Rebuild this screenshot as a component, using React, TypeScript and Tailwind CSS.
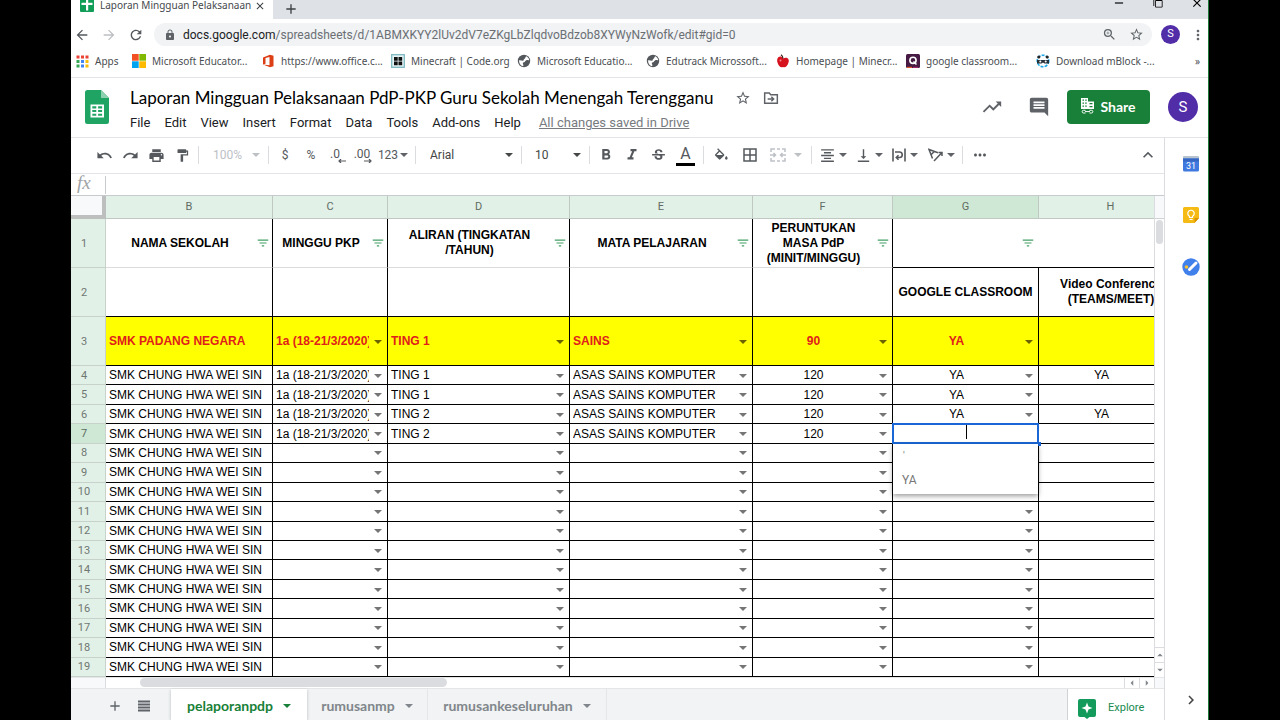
import type { ReactNode } from "react";
import {
  MdArrowBack, MdArrowForward, MdRefresh, MdLock, MdOutlineZoomIn, MdStarBorder, MdMoreVert,
  MdUndo, MdRedo, MdPrint, MdFormatPaint, MdFormatBold, MdFormatItalic, MdStrikethroughS,
  MdBorderAll, MdFormatAlignCenter, MdVerticalAlignBottom, MdMoreHoriz, MdExpandLess, MdFilterList, MdTrendingUp,
  MdComment, MdAdd, MdClose, MdChevronRight, MdRemove, MdFilterNone,
} from "react-icons/md";

const roboto = "font-[Roboto,'Liberation_Sans',sans-serif]";
const humanist = "font-['Noto_Sans','Open_Sans',sans-serif]";
const brand = "font-['Lato','Open_Sans',sans-serif]";

function Caret({ className = "fill-[#5f6368]" }: { className?: string }) {
  return (
    <svg viewBox="0 0 8 4" className={`h-1 w-2 shrink-0 ${className}`} aria-hidden="true">
      <path d="M0 0h8L4 4z" />
    </svg>
  );
}

function SheetsMark() {
  return (
    <svg viewBox="0 0 24 34" className="h-[34px] w-6 shrink-0" aria-hidden="true">
      <path d="M2.500 0H16l8 8v23.500a2.500 2.500 0 0 1-2.500 2.500h-19A2.500 2.500 0 0 1 0 31.500v-29A2.500 2.500 0 0 1 2.500 0z" fill="#1fa463" />
      <path d="M16 0l8 8h-8z" fill="#8ed1b1" />
      <path d="M5.500 14.500h13.500v13H5.500zM7.300 16.300v2.100h4v-2.100zm5.800 0v2.100h4v-2.100zM7.300 20v2.100h4V20zm5.800 0v2.100h4V20zM7.300 23.700v2.100h4v-2.100zm5.800 0v2.100h4v-2.100z" fill="#fff" fillRule="evenodd" />
    </svg>
  );
}

function TabIcon() {
  return (
    <svg viewBox="0 0 14 14" className="size-3.5 shrink-0" aria-hidden="true">
      <rect width="14" height="14" rx="1" fill="#0f9d58" />
      <path d="M6 1.500h2.200v11H6zM1.500 4.800h11V7h-11z" fill="#fff" />
    </svg>
  );
}

const appDots = ["#ea4335", "#ea4335", "#ea4335", "#34a853", "#4285f4", "#fbbc04", "#34a853", "#4285f4", "#fbbc04"];

const appsIcon = (
  <svg viewBox="0 0 13 13" className="size-[13px] shrink-0" aria-hidden="true">
    {appDots.map((c, i) => (
      <rect key={i} x={0.5 + (i % 3) * 4.500} y={0.5 + Math.floor(i / 3) * 4.500} width="3" height="3" fill={c} />
    ))}
  </svg>
);
const microsoftIcon = (
  <svg viewBox="0 0 14 14" className="size-3.5 shrink-0" aria-hidden="true">
    <path fill="#f25022" d="M0 0h6.700v6.700H0z" />
    <path fill="#7fba00" d="M7.300 0H14v6.700H7.300z" />
    <path fill="#00a4ef" d="M0 7.300h6.700V14H0z" />
    <path fill="#ffb900" d="M7.300 7.300H14V14H7.300z" />
  </svg>
);
const officeIcon = (
  <svg viewBox="0 0 14 14" className="size-3.5 shrink-0" aria-hidden="true">
    <path d="M2 3.500L9 .8l3.500 1v10.400l-3.500 1-7-2.700 6.500.8V2.900L4.500 4v5.700L2 10.600z" fill="#dc3e15" />
  </svg>
);
const codeIcon = (
  <svg viewBox="0 0 14 14" className="size-3.5 shrink-0" aria-hidden="true">
    <rect x=".7" y=".7" width="12.600" height="12.600" fill="#e8f5f7" stroke="#7db8c0" strokeWidth="1.300" />
    <path d="M3 3h3.700v3.700H3zM7.500 3h3.700v3.700H7.500zM3 7.500h3.700v3.700H3zM7.500 7.500h3.700v3.700H7.500z" fill="#111" />
  </svg>
);
const globeIcon = (
  <svg viewBox="0 0 14 14" className="size-3.5 shrink-0" aria-hidden="true">
    <circle cx="7" cy="7" r="6.200" fill="#54585c" />
    <path d="M2 6.500C3.500 6 5 7 6 6.800s.5-1.600 1.500-2 .5-1.700 1.800-2.600C11 3 12 4.500 12.300 6c-1 .8-2-.3-3 .3S8 8 7 8.300 5.500 9 6 10s.5 1.500 0 2.200C3.500 11.500 2 9.500 2 6.500z" fill="#fff" />
    <path d="M3 4.500C4 3 5 2.300 6.500 2c.3.8-.7 1.200-1 1.900s-1.500.9-2.500.6zM9.500 9.500l2-.8c-.4 1-.9 1.700-1.700 2.400z" fill="#54585c" />
  </svg>
);
const appleIcon = (
  <svg viewBox="0 0 14 14" className="size-3.5 shrink-0" aria-hidden="true">
    <path d="M7 4.500C4 0 0 4 1.500 8.500 2.500 12.500 5 14 7 13c2 1 4.500-.5 5.500-4.500C14 4 10 2.500 7 4.500z" fill="#d5121e" />
    <path d="M7 4.500C6.800 2.800 6 1.500 5 .8" stroke="#3b1a10" strokeWidth="1.200" fill="none" />
    <circle cx="4.500" cy="6.500" r="1" fill="#f58a8a" />
  </svg>
);
const quizIcon = (
  <svg viewBox="0 0 14 14" className="size-3.5 shrink-0" aria-hidden="true">
    <rect width="14" height="14" rx="1.500" fill="#461a42" />
    <path d="M1 12.800h5V14H1z" fill="#e0562f" />
    <path d="M7 12.800h5V14H7z" fill="#a02767" />
    <circle cx="7" cy="6.300" r="3.100" fill="none" stroke="#fff" strokeWidth="1.600" />
    <path d="M7.500 7.500l3 3" stroke="#fff" strokeWidth="1.500" />
  </svg>
);
const pandaIcon = (
  <svg viewBox="0 0 14 14" className="size-3.5 shrink-0" aria-hidden="true">
    <circle cx="7" cy="7" r="5.800" fill="#fff" stroke="#1ba9e6" strokeWidth="1.600" strokeDasharray="3 1.200" />
    <circle cx="2.800" cy="3" r="1.600" fill="#222" />
    <circle cx="11.200" cy="3" r="1.600" fill="#222" />
    <path d="M1 6h12v3.500H8.500L7 8.500 5.500 9.500H1z" fill="#26323a" />
    <circle cx="4.300" cy="7.600" r="1" fill="#fff" />
    <circle cx="9.700" cy="7.600" r="1" fill="#fff" />
  </svg>
);

const bookmarks: { label: string; width: string; icon: ReactNode }[] = [
  { label: "Apps", width: "w-[56px]", icon: appsIcon },
  { label: "Microsoft Educator...", width: "w-[129px]", icon: microsoftIcon },
  { label: "https://www.office.c...", width: "w-[130px]", icon: officeIcon },
  { label: "Minecraft | Code.org", width: "w-[126px]", icon: codeIcon },
  { label: "Microsoft Educatio...", width: "w-[129px]", icon: globeIcon },
  { label: "Edutrack Microssoft...", width: "w-[130px]", icon: globeIcon },
  { label: "Homepage | Minecr...", width: "w-[130px]", icon: appleIcon },
  { label: "google classroom...", width: "w-[130px]", icon: quizIcon },
  { label: "Download mBlock -...", width: "w-[130px]", icon: pandaIcon },
];

function Browser() {
  return (
    <div className={`${roboto} shrink-0`}>
      <div className="flex h-[19px] overflow-hidden bg-[#dee1e6]">
        <div className="flex h-[19px] w-[202px] items-start gap-1.5 bg-white pl-[9px]">
          <div className="-mt-0.5"><TabIcon /></div>
          <span className={`${humanist} w-[148px] text-[10px] leading-[11px] whitespace-nowrap text-[#45494d]`}>Laporan Mingguan Pelaksanaan</span>
          <button aria-label="Close tab"><MdClose className="size-3 text-[#3c4043]" /></button>
        </div>
        <div className="flex-1 rounded-bl-md bg-[#dee1e6] pl-2.5">
          <button aria-label="New tab" className="-mt-1"><MdAdd className="size-4 text-[#3c4043]" /></button>
        </div>
        <div className="flex items-start gap-[27px] pr-1 text-black">
          <button aria-label="Minimize"><MdRemove className="-mt-1 size-3.5" /></button>
          <button aria-label="Restore"><MdFilterNone className="-mt-0.5 size-2.5 -scale-x-100 rotate-180" /></button>
          <button aria-label="Close window"><MdClose className="-mt-1 size-3.5" /></button>
        </div>
      </div>
      <div className="flex h-[31px] items-center bg-white pl-[3px]">
        <button aria-label="Back" className="w-[27px]"><MdArrowBack className="size-4 text-[#55595d]" /></button>
        <button aria-label="Forward" className="w-[27px]"><MdArrowForward className="size-4 text-[#bcbfc3]" /></button>
        <button aria-label="Reload" className="w-[26px]"><MdRefresh className="size-4 text-[#55595d]" /></button>
        <label className="flex h-[23px] flex-1 items-center rounded-full bg-[#f1f3f4] pr-2 pl-2.5">
          <MdLock className="size-3 text-[#5f6368]" aria-hidden="true" />
          <span className="ml-[7px] flex-1 overflow-hidden text-[12px] whitespace-nowrap text-[#6b6f74]">
            <span className="text-[#202124]">docs.google.com</span>/spreadsheets/d/1ABMXKYY2lUv2dV7eZKgLbZlqdvoBdzob8XYWyNzWofk/edit#gid=0
          </span>
          <button aria-label="Zoom" className="mr-3"><MdOutlineZoomIn className="size-[15px] text-[#5f6368]" /></button>
          <button aria-label="Bookmark this page"><MdStarBorder className="size-[15px] text-[#5f6368]" /></button>
        </label>
        <span className="ml-[9px] flex size-[19px] items-center justify-center rounded-full bg-[#512da8] text-[11px] text-white">S</span>
        <button aria-label="Browser menu" className="mr-0.5 ml-2.5"><MdMoreVert className="size-4 text-[#5f6368]" /></button>
      </div>
      <nav aria-label="Bookmarks" className={`${humanist} flex h-7 items-start border-b border-[#e2e4e7] bg-white pt-[3px] pr-2 pl-[5px] text-[10px] leading-4 text-[#4a4e52]`}>
        {bookmarks.map((b) => (
          <a key={b.label} href="#" className={`flex items-center gap-1.5 whitespace-nowrap ${b.width}`}>
            {b.icon}
            {b.label}
          </a>
        ))}
        <button aria-label="More bookmarks" className="ml-auto">»</button>
      </nav>
    </div>
  );
}

const menus = ["File", "Edit", "View", "Insert", "Format", "Data", "Tools", "Add-ons", "Help"];

function DocHeader() {
  return (
    <header className="flex h-[60px] shrink-0 items-start border-b border-[#e2e4e7] pt-3 pr-2.5 pl-3.5">
      <SheetsMark />
      <div className="-mt-1.5 ml-[21px]">
        <div className="flex h-7 items-center text-[#5f6368]">
          <h1 className={`${brand} text-[17px] leading-6 whitespace-nowrap text-black`}>Laporan Mingguan Pelaksanaan PdP-PKP Guru Sekolah Menengah Terengganu</h1>
          <button aria-label="Star" className="ml-[22px]"><MdStarBorder className="size-4" /></button>
          <button aria-label="Move" className="ml-3">
            <svg viewBox="0 0 24 24" className="size-4" fill="none" stroke="currentColor" strokeWidth="2.200" aria-hidden="true">
              <path d="M2.500 4.500h7l2 2.500h10v13h-19zM7 13.500h8M12.500 10l3.500 3.500-3.500 3.500" />
            </svg>
          </button>
        </div>
        <nav aria-label="Menu" className={`${roboto} flex gap-3.5 text-[13px] leading-[22px] text-[#202124]`}>
          {menus.map((m) => <button key={m}>{m}</button>)}
          <a href="#" className="ml-1 text-[#777b80] underline">All changes saved in Drive</a>
        </nav>
      </div>
      <div className="ml-auto flex h-[34px] items-center text-[#5f6368]">
        <button aria-label="Activity"><MdTrendingUp className="size-[22px]" /></button>
        <button aria-label="Comments" className="ml-[25px]"><MdComment className="size-[22px]" /></button>
        <button className={`${brand} ml-[17px] flex h-[34px] w-[83px] items-center justify-center gap-1.5 rounded bg-[#188038] pb-0.5 text-[14px] font-bold text-white`}>
          <svg viewBox="0 0 13 16" className="h-4 w-[13px]" fill="#fff" aria-hidden="true">
            <path d="M0 0h7v3.500h6V11H0zM1.500 1.500v1.300h1.500V1.500zm2.700 0v1.300h1.500V1.500zM1.500 4.500v1.300h1.500V4.500zm2.700 0v1.300h1.500V4.500zM1.500 7.500v1.300h1.500V7.500zm2.700 0v1.300h1.500V7.500zM8.500 5v1.300h3V5zm0 3v1.300h3V8z" fillRule="evenodd" />
            <path d="M4.500 12.300h-2a1.300 1.300 0 0 0 0 2.700h2M8.500 12.300h2a1.300 1.300 0 0 1 0 2.700h-2M4 13.600h5" stroke="#fff" fill="none" />
          </svg>
          Share
        </button>
        <button aria-label="Account" className={`${roboto} ml-[18px] size-[30px] rounded-full bg-[#512da8] text-[15px] text-white`}>S</button>
      </div>
    </header>
  );
}

function Divider() {
  return <span className="mx-[3px] h-[18px] w-px shrink-0 bg-[#dadce0]" />;
}

function Tool({ label, width = "w-[26px]", children }: { label: string; width?: string; children: ReactNode }) {
  return (
    <button aria-label={label} className={`flex h-7 shrink-0 items-center justify-center ${width}`}>
      {children}
    </button>
  );
}

function Picker({ label, value, width, tone = "text-[#444746]" }: { label: string; value: string; width: string; tone?: string }) {
  return (
    <label className={`flex shrink-0 items-center pr-[5px] ${width} ${tone}`}>
      <select aria-label={label} defaultValue={value} className="min-w-0 flex-1 appearance-none bg-transparent outline-none">
        <option>{value}</option>
      </select>
      <Caret className="fill-current" />
    </label>
  );
}

function Toolbar() {
  return (
    <div role="toolbar" aria-label="Formatting" className={`${roboto} flex h-9 shrink-0 items-center border-b border-[#e2e4e7] pb-px pl-5 text-[12px] text-[#55595d]`}>
      <Tool label="Undo"><MdUndo className="size-[17px]" /></Tool>
      <Tool label="Redo"><MdRedo className="size-[17px]" /></Tool>
      <Tool label="Print"><MdPrint className="size-[17px]" /></Tool>
      <Tool label="Paint format"><MdFormatPaint className="size-[15px]" /></Tool>
      <Divider />
      <Picker label="Zoom" value="100%" width="w-[63px] pl-[11px]" tone="text-[#bdc1c6]" />
      <Divider />
      <Tool label="Currency">$</Tool>
      <Tool label="Percent">%</Tool>
      <Tool label="Decrease decimal places">
        <span className="flex flex-col items-end pr-1 leading-3">.0
          <svg viewBox="0 0 8 4" className="-mt-px -mr-1.5 h-1 w-2" fill="none" stroke="currentColor" strokeWidth="1.200" aria-hidden="true"><path d="M8 2H1M3 0L1 2l2 2" /></svg>
        </span>
      </Tool>
      <Tool label="Increase decimal places">
        <span className="flex flex-col items-end pr-0.5 leading-3">.00
          <svg viewBox="0 0 8 4" className="-mt-px -mr-0.5 h-1 w-2" fill="none" stroke="currentColor" strokeWidth="1.200" aria-hidden="true"><path d="M0 2h7M5 0l2 2-2 2" /></svg>
        </span>
      </Tool>
      <Tool label="More formats" width="w-9"><span className="-ml-0.5 mr-0.5">123</span><Caret /></Tool>
      <Divider />
      <Picker label="Font" value="Arial" width="w-[99px] pl-[11px]" />
      <Divider />
      <Picker label="Font size" value="10" width="w-[61px] pl-2.5" />
      <Divider />
      <Tool label="Bold"><MdFormatBold className="size-[18px]" /></Tool>
      <Tool label="Italic"><MdFormatItalic className="size-[18px]" /></Tool>
      <Tool label="Strikethrough"><MdStrikethroughS className="size-[17px]" /></Tool>
      <Tool label="Text color" width="w-[29px]">
        <span className="w-[19px] border-b-[3px] border-black text-center text-[16px] leading-[18px]">A</span>
      </Tool>
      <Divider />
      <Tool label="Fill color" width="w-7">
        <svg viewBox="0 0 24 24" className="size-4" fill="currentColor" aria-hidden="true">
          <path d="M16.560 10.940L7.620 2 6.210 3.410l2.380 2.380-5.150 5.150a1.490 1.490 0 0 0 0 2.120l5.500 5.500c.29.29.68.44 1.060.44s.77-.15 1.060-.44l5.500-5.500c.59-.58.59-1.530 0-2.120zM5.210 12L10 7.210 14.790 12H5.210zM20 13.500s-2 2.170-2 3.500a2 2 0 1 0 4 0c0-1.330-2-3.500-2-3.500z" />
        </svg>
      </Tool>
      <Tool label="Borders" width="w-[29px]"><MdBorderAll className="size-[18px]" /></Tool>
      <Tool label="Merge cells" width="w-11">
        <svg viewBox="0 0 16 14" className="mr-2 h-3.5 w-4" fill="none" stroke="#bdc1c6" strokeWidth="1.500" aria-hidden="true">
          <path d="M1 4V1h4M7 1h3M12 1h3v3M1 10v3h4M7 13h3M12 13h3v-3M0 7h5M3.500 5l2 2-2 2M16 7h-5M12.500 5l-2 2 2 2" />
        </svg>
        <Caret className="fill-[#bdc1c6]" />
      </Tool>
      <Divider />
      <Tool label="Horizontal align" width="w-9"><MdFormatAlignCenter className="mr-[3px] size-[17px]" /><Caret /></Tool>
      <Tool label="Vertical align" width="w-9"><MdVerticalAlignBottom className="mr-[3px] size-[17px]" /><Caret /></Tool>
      <Tool label="Text wrapping" width="w-9">
        <svg viewBox="0 0 14 14" className="mr-1 size-3.5" fill="none" stroke="currentColor" strokeWidth="1.600" aria-hidden="true">
          <path d="M1 .5v13M13 .5v13M3 4h4.500a2.500 2.500 0 0 1 0 5.500H4.500M6.500 7.300L4.300 9.500l2.200 2.200" />
        </svg>
        <Caret />
      </Tool>
      <Tool label="Text rotation" width="w-9">
        <svg viewBox="0 0 15 14" className="mr-1 h-3.5 w-[15px]" fill="none" stroke="currentColor" strokeWidth="1.500" aria-hidden="true">
          <path d="M4.500 10.500L1 1.500l9 3.200M3 6.800l3.500-3.500M6 13L13.500 5M10.500 4.500H14V8" />
        </svg>
        <Caret />
      </Tool>
      <Divider />
      <Tool label="More" width="w-7"><MdMoreHoriz className="size-[18px]" /></Tool>
      <div className="ml-auto"><Tool label="Hide menus" width="w-8"><MdExpandLess className="size-5" /></Tool></div>
    </div>
  );
}

const columns = [
  { id: "B", width: "w-[167px]" },
  { id: "C", width: "w-[115px]" },
  { id: "D", width: "w-[182px]" },
  { id: "E", width: "w-[183px]" },
  { id: "F", width: "w-[140px]" },
  { id: "G", width: "w-[146px]" },
  { id: "H", width: "w-[144px]" },
];

const headings = ["NAMA SEKOLAH", "MINGGU PKP", "ALIRAN (TINGKATAN /TAHUN)", "MATA PELAJARAN", "PERUNTUKAN MASA PdP (MINIT/MINGGU)", ""];

type Row = { n: number; cells: string[] };
const school = "SMK CHUNG HWA WEI SIN";
const week = "1a (18-21/3/2020)";
const sample: Row = { n: 3, cells: ["SMK PADANG NEGARA", week, "TING 1", "SAINS", "90", "YA", ""] };
const rows: Row[] = [
  { n: 4, cells: [school, week, "TING 1", "ASAS SAINS KOMPUTER", "120", "YA", "YA"] },
  { n: 5, cells: [school, week, "TING 1", "ASAS SAINS KOMPUTER", "120", "YA", ""] },
  { n: 6, cells: [school, week, "TING 2", "ASAS SAINS KOMPUTER", "120", "YA", "YA"] },
  { n: 7, cells: [school, week, "TING 2", "ASAS SAINS KOMPUTER", "120", "", ""] },
  ...Array.from({ length: 12 }, (_, i) => ({ n: i + 8, cells: [school, "", "", "", "", "", ""] })),
];

function RowNumber({ n, active = false, size = "" }: { n: number; active?: boolean; size?: string }) {
  return (
    <th scope="row" className={`${roboto} border-r border-b border-[#c6d2ca] pt-px pr-2 text-[11px] leading-3 font-normal ${size} ${active ? "bg-[#cfe8d5] text-[#5b6b60]" : "bg-[#e2f1e7] text-[#6f7773]"}`}>{n}</th>
  );
}

function EditingCell() {
  return (
    <td className="relative border-r border-b border-black">
      <div className="absolute -top-px -left-px z-10 h-[21px] w-[147px] border-2 border-[#1a66d6] bg-white">
        <input aria-label="Cell G7" className="block size-full text-center caret-transparent outline-none" />
        <span className="absolute top-0 left-1/2 h-3.5 w-px bg-black" />
        <span className="absolute -right-1 -bottom-1 size-1 bg-[#1a66d6]" />
        <ul role="listbox" aria-label="Options" className={`${roboto} absolute top-[19px] -left-px h-[50px] w-[145px] bg-white text-[12px] leading-4 text-[#777] shadow-[0_2px_5px_rgba(0,0,0,0.4)]`}>
          <li role="option" aria-selected="false" className="h-7 pt-1 pl-2.5 text-[10px]">'</li>
          <li role="option" aria-selected="false" className="pl-[9px]">YA</li>
        </ul>
      </div>
    </td>
  );
}

function DataRow({ row, highlighted = false }: { row: Row; highlighted?: boolean }) {
  return (
    <tr className={highlighted ? "bg-[#ffff00] font-bold text-[#e0201b]" : "text-black"}>
      <RowNumber n={row.n} active={row.n === 7} size={highlighted ? "h-[49px]" : ""} />
      {row.cells.map((text, i) => {
        if (row.n === 7 && i === 5) return <EditingCell key={i} />;
        return (
          <td key={i} className="border-r border-b border-black p-0">
            <div className={`flex items-center pt-px ${i === 0 ? "" : "pr-[5px]"} ${i >= 4 ? "" : "pl-[3px]"}`}>
              <span className={`h-[15px] flex-1 overflow-hidden whitespace-nowrap ${i >= 4 ? "text-center" : ""}`}>{text}</span>
              {i > 0 && i < 6 && (
                <button aria-label={`Choose value for ${columns[i].id}${row.n}`} className="flex w-[13px] justify-end">
                  <Caret className={highlighted ? "fill-[#6b6200]" : "fill-[#757575]"} />
                </button>
              )}
              {i === 6 && <span className="w-[13px]" />}
            </div>
          </td>
        );
      })}
    </tr>
  );
}

function Grid() {
  return (
    <div className="flex min-h-0 flex-1 border-t border-[#c8cbce]">
      <div className="min-w-0 flex-1 overflow-hidden">
        <table className="h-[481px] w-[1112px] table-fixed border-separate border-spacing-0 font-['Liberation_Sans',Arial,sans-serif] text-[12px] leading-[15px]">
          <thead className={`${roboto} text-[11px] text-[#5f6b64]`}>
            <tr>
              <th aria-label="Select all" className="h-[23px] w-[35px] border-r-4 border-b-4 border-[#bcbfbd] bg-[#f8f9fa]" />
              {columns.map((c) => (
                <th key={c.id} scope="col" className={`border-r border-b border-[#bfc9c2] pb-0.5 font-normal ${c.width} ${c.id === "G" ? "bg-[#cfe8d5]" : "bg-[#e2f1e7]"}`}>{c.id}</th>
              ))}
            </tr>
          </thead>
          <tbody>
            <tr>
              <RowNumber n={1} size="h-[49px]" />
              {headings.map((h, i) => (
                <td key={i} className={`border-b p-0 text-center font-bold ${i < 5 ? "border-r border-r-black border-b-[#dcdcdc] pr-0.5" : "border-b-black pr-1"}`}>
                  <div className="flex items-center">
                    <span className="flex-1">{h}</span>
                    <button aria-label={`Filter ${columns[i].id}`} className="ml-0.5 text-[#43a066]"><MdFilterList className="size-3.5" /></button>
                  </div>
                </td>
              ))}
              <td className="border-b border-black" />
            </tr>
            <tr>
              <RowNumber n={2} size="h-[49px]" />
              {[0, 1, 2, 3, 4].map((i) => <td key={i} className="border-r border-b border-black" />)}
              <td className="border-r border-b border-black p-0 text-center font-bold whitespace-nowrap">GOOGLE CLASSROOM</td>
              <td className="border-b border-black p-0 text-center font-bold whitespace-nowrap">Video Conference<br />(TEAMS/MEET)</td>
            </tr>
            <DataRow row={sample} highlighted />
            {rows.map((r) => <DataRow key={r.n} row={r} />)}
          </tbody>
        </table>
      </div>
      <div className="flex w-2.5 flex-col border-l border-[#dadce0]">
        <div className="h-[23px] border-b border-[#d0d3d6] bg-[#f8f9fa]" />
        <div className="mx-px mt-px h-6 rounded-full bg-[#dadce0]" />
        <button aria-label="Scroll up" className="mt-auto flex h-[15px] items-center justify-center border-t border-[#dadce0]"><Caret className="scale-75 rotate-180 fill-[#80868b]" /></button>
        <button aria-label="Scroll down" className="flex h-[15px] items-center justify-center border-t border-[#dadce0]"><Caret className="scale-75 fill-[#80868b]" /></button>
      </div>
    </div>
  );
}

function HorizontalScroll() {
  return (
    <div className="flex h-[11px] shrink-0 border-t border-[#e4e6e8]">
      <div className="w-[35px] border-r border-[#dadce0] bg-[#f8f9fa]" />
      <div className="flex-1 pl-[34px]"><div className="h-[9px] w-[307px] rounded-full bg-[#dadce0]" /></div>
      <button aria-label="Scroll left" className="flex w-[15px] items-center justify-center border-l border-[#dadce0]"><Caret className="scale-75 rotate-90 fill-[#80868b]" /></button>
      <button aria-label="Scroll right" className="flex w-[15px] items-center justify-center border-l border-[#dadce0]"><Caret className="scale-75 -rotate-90 fill-[#80868b]" /></button>
      <div className="w-2.5 border-l border-[#dadce0] bg-[#f8f9fa]" />
    </div>
  );
}

function SheetTabs() {
  return (
    <div className={`${brand} flex h-8 shrink-0 border-t border-[#e4e6e8] bg-[#f1f3f4] text-[14px] font-bold text-[#80868b]`}>
      <div className="flex w-[100px] items-center pt-0.5 pl-9 text-[#5f6368]">
        <button aria-label="Add sheet" className="w-[31px]"><MdAdd className="size-4" /></button>
        <button aria-label="All sheets">
          <svg viewBox="0 0 12 12" className="size-3" stroke="currentColor" strokeWidth="2" aria-hidden="true"><path d="M0 1.500h12M0 4.500h12M0 7.500h12M0 10.500h12" /></svg>
        </button>
      </div>
      <button aria-current="page" className="flex w-[136px] items-center justify-center gap-2.5 bg-white pt-0.5 text-[#188038] shadow-[0_1px_3px_rgba(60,64,67,0.3)]">pelaporanpdp <Caret className="fill-[#188038]" /></button>
      <button className="flex w-[121px] items-center justify-center gap-2.5 border-r border-[#e4e6e8] pt-0.5">rumusanmp <Caret className="fill-[#80868b]" /></button>
      <button className="flex w-[179px] items-center justify-center gap-2.5 border-r border-[#e4e6e8] pt-0.5">rumusankeseluruhan <Caret className="fill-[#80868b]" /></button>
      <button className={`${roboto} ml-auto flex w-[97px] items-center gap-3 border-l border-[#d0d3d6] bg-white pt-2 pl-2.5 text-[11px] font-normal text-[#188a50]`}>
        <svg viewBox="0 0 18 20" className="h-5 w-[18px]" aria-hidden="true">
          <path d="M2 0h14a2 2 0 0 1 2 2v14a2 2 0 0 1-2 2h-4.500L9 20l-2.500-2H2a2 2 0 0 1-2-2V2a2 2 0 0 1 2-2z" fill="#149a5b" />
          <path d="M9 3.500l1.500 4L14.500 9l-4 1.500L9 14.500l-1.500-4-4-1.500 4-1.500z" fill="#fff" />
        </svg>
        Explore
      </button>
    </div>
  );
}

function SidePanel() {
  return (
    <aside aria-label="Side panel" className="flex w-11 shrink-0 flex-col items-center border-l border-[#dadce0] pt-[18px] pl-2">
      <button aria-label="Calendar">
        <svg viewBox="0 0 16 16" className="size-4" aria-hidden="true">
          <rect width="16" height="4" rx="1" fill="#b9c3d0" />
          <path d="M0 2.500h16V14a1.500 1.500 0 0 1-1.500 1.500h-13A1.500 1.500 0 0 1 0 14z" fill="#3f79e0" />
          <path d="M0 2.500h16v3H0z" fill="#3466c2" />
          <text x="8" y="12.500" textAnchor="middle" fontSize="9" fontFamily="Roboto" fill="#fff">31</text>
        </svg>
      </button>
      <button aria-label="Keep" className="mt-[35px]">
        <svg viewBox="0 0 16 16" className="size-4" aria-hidden="true">
          <path d="M1.500 0h13A1.500 1.500 0 0 1 16 1.500V11l-4.500 5h-10A1.500 1.500 0 0 1 0 14.500v-13A1.500 1.500 0 0 1 1.500 0z" fill="#f5ba14" />
          <path d="M16 11l-4.500 5v-5z" fill="#d99400" />
          <path d="M6.500 10.500V9.300a3.200 3.200 0 1 1 3 0v1.200zM6.500 12.500h3" fill="none" stroke="#fff" strokeWidth="1.200" />
        </svg>
      </button>
      <button aria-label="Tasks" className="mt-[35px]">
        <svg viewBox="0 0 18 18" className="size-[18px]" aria-hidden="true">
          <circle cx="9" cy="9" r="8.700" fill="#4080ea" />
          <circle cx="4.500" cy="9" r="1.800" fill="#fbc02d" />
          <path d="M7.500 11.500L14 5" stroke="#fff" strokeWidth="3" strokeLinecap="round" />
        </svg>
      </button>
      <button aria-label="Collapse side panel" className="mt-auto mb-[11px]"><MdChevronRight className="size-[18px] text-[#444]" /></button>
    </aside>
  );
}

export default function App() {
  return (
    <div className="h-screen overflow-hidden bg-black px-[71px]">
      <div className="flex h-full flex-col border-r border-[#1f7a3a] bg-white">
        <Browser />
        <DocHeader />
        <div className="flex min-h-0 flex-1">
          <main className="flex min-w-0 flex-1 flex-col">
            <Toolbar />
            <label className="flex h-[21px] shrink-0 items-center">
              <span className="h-[18px] w-[35px] border-r border-[#c8cbce] pl-1.5 font-['Liberation_Serif',serif] text-[19px] leading-[14px] text-[#a0a3a6] italic">fx</span>
              <input aria-label="Formula" className="flex-1 px-2 text-[12px] outline-none" />
            </label>
            <Grid />
            <HorizontalScroll />
            <SheetTabs />
          </main>
          <SidePanel />
        </div>
      </div>
    </div>
  );
}
